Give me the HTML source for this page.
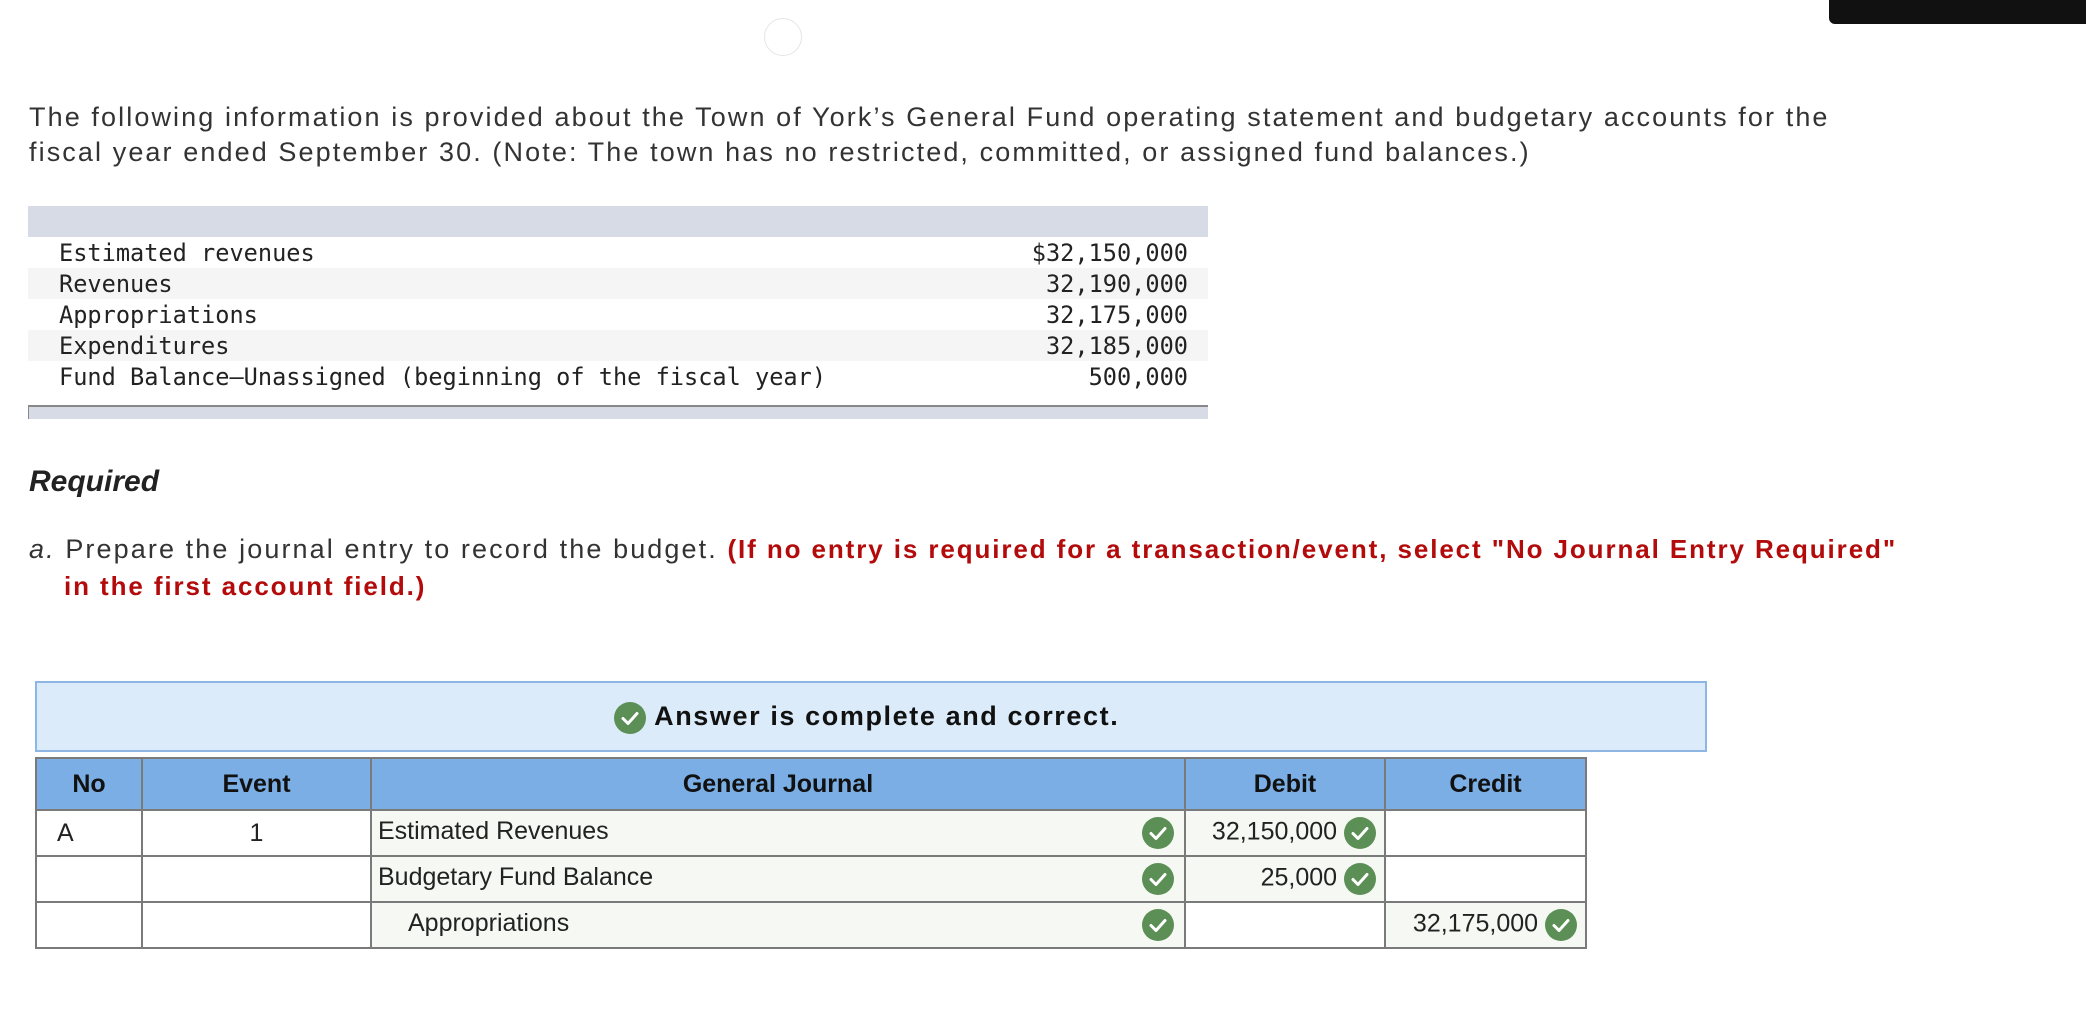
<!DOCTYPE html>
<html><head><meta charset="utf-8"><style>
*{margin:0;padding:0;box-sizing:border-box}
body{width:2086px;height:1016px;background:#fff;position:relative;overflow:hidden;font-family:"Liberation Sans",Arial,sans-serif;color:#222}
.a{position:absolute;white-space:nowrap}
.p{font-size:27px;color:#333;left:29px;letter-spacing:2.1px}
.mono{font-family:"DejaVu Sans Mono","Liberation Mono",monospace;font-size:23.6px;color:#222}
.row{position:absolute;left:28px;width:1180px;height:31px}
.lab{position:absolute;left:31px;top:2px}
.num{position:absolute;right:20px;top:2px}
table{position:absolute;left:35px;top:757px;border-collapse:collapse;font-size:25px}
td,th{border:2px solid #7a7a7a;height:46px;padding:0 6px}
th{background:#7aaee4;font-weight:bold;height:52px;color:#111}
td{color:#222}
.g{background:#f6f8f4}
.ck{display:inline-block;width:32px;height:32px;border-radius:50%;background:#5b8f55;vertical-align:middle;position:relative}
.ck svg{position:absolute;left:0;top:0}
</style></head><body>
<div class="a" style="left:1829px;top:0;width:260px;height:24px;background:#111;border-radius:0 0 0 6px"></div>
<div class="a" style="left:764px;top:18px;width:38px;height:38px;border-radius:50%;border:1px solid #e6e6e6"></div>
<div class="a p" style="top:102px">The following information is provided about the Town of York’s General Fund operating statement and budgetary accounts for the</div>
<div class="a p" style="top:137px">fiscal year ended September 30. (Note: The town has no restricted, committed, or assigned fund balances.)</div>

<div class="a" style="left:28px;top:206px;width:1180px;height:31px;background:#d6dbe6"></div>
<div class="row mono" style="top:237px;background:#fff"><span class="lab">Estimated revenues</span><span class="num">$32,150,000</span></div>
<div class="row mono" style="top:268px;background:#f5f5f5"><span class="lab">Revenues</span><span class="num">32,190,000</span></div>
<div class="row mono" style="top:299px;background:#fff"><span class="lab">Appropriations</span><span class="num">32,175,000</span></div>
<div class="row mono" style="top:330px;background:#f5f5f5"><span class="lab">Expenditures</span><span class="num">32,185,000</span></div>
<div class="row mono" style="top:361px;background:#fff"><span class="lab">Fund Balance—Unassigned (beginning of the fiscal year)</span><span class="num">500,000</span></div>
<div class="a" style="left:28px;top:405px;width:1180px;height:14px;background:#d6dbe6;border-top:2px solid #888;border-left:1px solid #888"></div>

<div class="a" style="left:29px;top:465px;font-size:30px;font-weight:bold;font-style:italic;color:#222">Required</div>
<div class="a p" style="top:534px;color:#333"><i>a.</i> Prepare the journal entry to record the budget. <b style="color:#b30b0b;font-size:26px;letter-spacing:1.9px">(If no entry is required for a transaction/event, select "No Journal Entry Required"</b></div>
<div class="a" style="left:64px;top:571px;font-size:26px;font-weight:bold;color:#b30b0b;letter-spacing:1.9px">in the first account field.)</div>

<div class="a" style="left:35px;top:681px;width:1672px;height:71px;background:#dbebf9;border:2px solid #8db6e2"></div>
<div class="a" style="left:614px;top:701px;font-size:27px;font-weight:bold;color:#111;letter-spacing:1.6px"><span class="ck"><svg width="32" height="32"><path d="M9 16.5l5 5 9-10" stroke="#fff" stroke-width="3" fill="none" stroke-linecap="round" stroke-linejoin="round"/></svg></span> Answer is complete and correct.</div>

<table>
<tr><th style="width:106px">No</th><th style="width:229px">Event</th><th style="width:814px">General Journal</th><th style="width:200px">Debit</th><th style="width:201px">Credit</th></tr>
<tr><td style="padding-left:20px">A</td><td style="text-align:center">1</td><td class="g">Estimated Revenues<span class="ck" style="float:right;margin-right:4px"><svg width="32" height="32"><path d="M9 16.5l5 5 9-10" stroke="#fff" stroke-width="3" fill="none" stroke-linecap="round" stroke-linejoin="round"/></svg></span></td><td class="g" style="text-align:right;padding-right:8px">32,150,000 <span class="ck"><svg width="32" height="32"><path d="M9 16.5l5 5 9-10" stroke="#fff" stroke-width="3" fill="none" stroke-linecap="round" stroke-linejoin="round"/></svg></span></td><td></td></tr>
<tr><td></td><td></td><td class="g">Budgetary Fund Balance<span class="ck" style="float:right;margin-right:4px"><svg width="32" height="32"><path d="M9 16.5l5 5 9-10" stroke="#fff" stroke-width="3" fill="none" stroke-linecap="round" stroke-linejoin="round"/></svg></span></td><td class="g" style="text-align:right;padding-right:8px">25,000 <span class="ck"><svg width="32" height="32"><path d="M9 16.5l5 5 9-10" stroke="#fff" stroke-width="3" fill="none" stroke-linecap="round" stroke-linejoin="round"/></svg></span></td><td></td></tr>
<tr><td></td><td></td><td class="g" style="padding-left:36px">Appropriations<span class="ck" style="float:right;margin-right:4px"><svg width="32" height="32"><path d="M9 16.5l5 5 9-10" stroke="#fff" stroke-width="3" fill="none" stroke-linecap="round" stroke-linejoin="round"/></svg></span></td><td></td><td class="g" style="text-align:right;padding-right:8px">32,175,000 <span class="ck"><svg width="32" height="32"><path d="M9 16.5l5 5 9-10" stroke="#fff" stroke-width="3" fill="none" stroke-linecap="round" stroke-linejoin="round"/></svg></span></td></tr>
</table>
</body></html>
